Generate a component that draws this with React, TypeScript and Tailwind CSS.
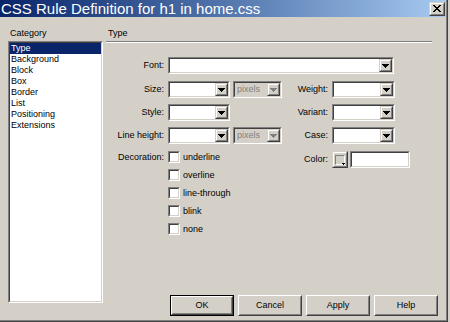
import React from "react";

const face = "bg-[#d4d0c8]";

function Sunken({ className = "", inner = "", children }: { className?: string; inner?: string; children?: React.ReactNode }) {
  return (
    <div className={"border border-t-[#808080] border-l-[#808080] border-r-white border-b-white " + className}>
      <div className={"h-full w-full border border-t-[#404040] border-l-[#404040] border-r-[#d4d0c8] border-b-[#d4d0c8] " + inner}>
        {children}
      </div>
    </div>
  );
}

function Raised({ className = "", inner = "", children }: { className?: string; inner?: string; children?: React.ReactNode }) {
  return (
    <div className={"border border-t-[#d4d0c8] border-l-[#d4d0c8] border-r-[#404040] border-b-[#404040] " + className}>
      <div className={"flex h-full w-full items-center justify-center border border-t-white border-l-white border-r-[#808080] border-b-[#808080] bg-[#d4d0c8] " + inner}>
        {children}
      </div>
    </div>
  );
}

function Arrow({ disabled = false }: { disabled?: boolean }) {
  return (
    <svg width="7" height="4" viewBox="0 0 7 4" shapeRendering="crispEdges">
      <polygon points="0,0 7,0 3.5,4" fill={disabled ? "#808080" : "#000"} />
    </svg>
  );
}

function Combo({ width, disabled = false, value = "" }: { width: string; disabled?: boolean; value?: string }) {
  return (
    <Sunken className={width + " h-[17px]"} inner={"flex " + (disabled ? face : "bg-white")}>
      <div className={"flex-1 pl-[2px] text-[9px] leading-[13px] " + (disabled ? "text-[#808080]" : "")}>{value}</div>
      <Raised className="h-[13px] w-[13px]">
        <Arrow disabled={disabled} />
      </Raised>
    </Sunken>
  );
}

function Label({ text, width }: { text: string; width: string }) {
  return <div className={width + " shrink-0 pr-[4px] text-right text-[9px] leading-[17px]"}>{text}</div>;
}

function Check({ label }: { label: string }) {
  return (
    <div className="flex h-[12px] items-center gap-[3px]">
      <Sunken className="h-[12px] w-[12px]" inner="bg-white" />
      <span className="text-[9px] leading-[12px]">{label}</span>
    </div>
  );
}

function Btn({ label, primary = false }: { label: string; primary?: boolean }) {
  const body = (
    <div className="h-full w-full border border-t-white border-l-white border-r-[#404040] border-b-[#404040]">
      <div className="flex h-full w-full items-center justify-center border border-transparent border-r-[#808080] border-b-[#808080] text-[9px]">
        {label}
      </div>
    </div>
  );
  return <div className={"h-[21px] w-[64px] " + (primary ? "border border-black" : "")}>{body}</div>;
}

const categories = ["Type", "Background", "Block", "Box", "Border", "List", "Positioning", "Extensions"];

export default function App() {
  return (
    <div className="h-[322px] w-[450px] overflow-hidden bg-[#d4d0c8] text-black" style={{ fontFamily: '"Liberation Sans", Arial, sans-serif' }}>
      <div className="h-[322px] w-[448px] border-r border-b border-r-[#404040] border-b-[#404040]">
        <div className="flex h-full w-full flex-col border-r border-b border-r-[#808080] border-b-[#808080]">
          <div className="flex h-[17px] shrink-0 items-center justify-between bg-gradient-to-r from-[#0a246a] to-[#a6caf0] pr-[1px]">
            <span className="pl-[1px] text-[15px] leading-[17px] text-white">CSS Rule Definition for h1 in home.css</span>
            <Raised className="h-[14px] w-[16px]">
              <svg width="8" height="7" viewBox="0 0 8 7" shapeRendering="crispEdges">
                <path d="M0 0h2v1h1v1h2v-1h1v-1h2v1h-1v1h-1v1h-1v1h1v1h1v1h1v1h-2v-1h-1v-1h-2v1h-1v1h-2v-1h1v-1h1v-1h1v-1h-1v-1h-1v-1h-1z" fill="#000" />
              </svg>
            </Raised>
          </div>

          <div className="flex flex-1">
            <div className="flex w-[103px] shrink-0 flex-col pl-[8px]">
              <div className="mt-[11px] pl-[2px] text-[9px] leading-[11px]">Category</div>
              <Sunken className="mt-[2px] h-[262px] w-[95px]" inner="bg-white">
                {categories.map((c, i) => (
                  <div
                    key={c}
                    className={"pl-[1px] text-[9px] leading-[11px] " + (i === 0 ? "bg-[#0a246a] text-white" : "")}
                  >
                    {c}
                  </div>
                ))}
              </Sunken>
            </div>

            <div className="ml-[3px] flex flex-1 flex-col pb-[4px]">
              <div className="mt-[11px] pl-[2px] text-[9px] leading-[11px]">Type</div>
              <div className="mt-[2px] h-[2px] w-[326px] border-t border-b border-t-[#808080] border-b-white" />

              <div className="mt-[14px] flex">
                <Label text="Font:" width="w-[62px]" />
                <Combo width="w-[226px]" />
              </div>

              <div className="mt-[7px] flex">
                <Label text="Size:" width="w-[62px]" />
                <Combo width="w-[62px]" />
                <div className="ml-[3px]">
                  <Combo width="w-[49px]" disabled value="pixels" />
                </div>
                <Label text="Weight:" width="w-[50px]" />
                <Combo width="w-[63px]" />
              </div>

              <div className="mt-[6px] flex">
                <Label text="Style:" width="w-[62px]" />
                <Combo width="w-[62px]" />
                <div className="w-[52px]" />
                <Label text="Variant:" width="w-[50px]" />
                <Combo width="w-[63px]" />
              </div>

              <div className="mt-[6px] flex">
                <Label text="Line height:" width="w-[62px]" />
                <Combo width="w-[62px]" />
                <div className="ml-[3px]">
                  <Combo width="w-[49px]" disabled value="pixels" />
                </div>
                <Label text="Case:" width="w-[50px]" />
                <Combo width="w-[63px]" />
              </div>

              <div className="mt-[7px] flex items-start">
                <div className="w-[62px] shrink-0 pr-[4px] text-right text-[9px] leading-[12px]">Decoration:</div>
                <div className="flex w-[114px] flex-col gap-[6px]">
                  <Check label="underline" />
                  <Check label="overline" />
                  <Check label="line-through" />
                  <Check label="blink" />
                  <Check label="none" />
                </div>
                <Label text="Color:" width="w-[50px]" />
                <Raised className="h-[17px] w-[16px]" inner="relative">
                  <div className="h-[10px] w-[10px] border border-t-[#808080] border-l-[#808080] border-r-white border-b-white" />
                  <svg className="absolute right-[1px] bottom-[1px]" width="3" height="2" viewBox="0 0 3 2" shapeRendering="crispEdges">
                    <polygon points="0,0 3,0 1.5,2" fill="#000" />
                  </svg>
                </Raised>
                <Sunken className="ml-[2px] h-[17px] w-[60px]" inner="bg-white" />
              </div>

              <div className="mt-auto ml-[64px] flex gap-[4px]">
                <Btn label="OK" primary />
                <Btn label="Cancel" />
                <Btn label="Apply" />
                <Btn label="Help" />
              </div>
            </div>
          </div>
        </div>
      </div>
    </div>
  );
}
